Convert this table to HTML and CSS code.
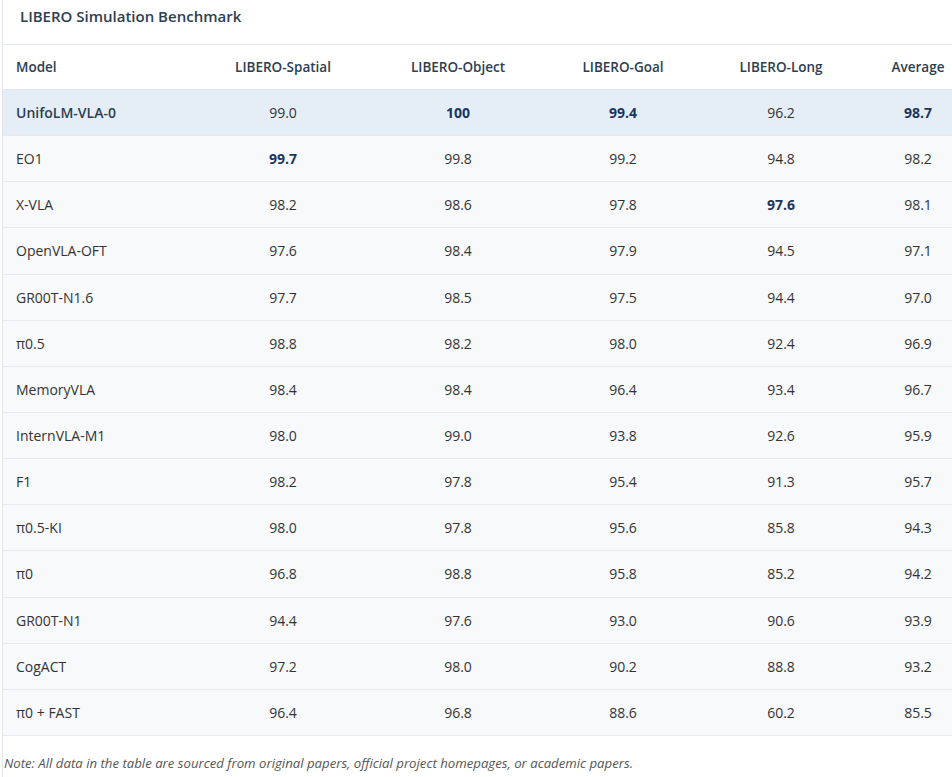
FILE: index.html
```html
<!DOCTYPE html>
<html>
<head>
<meta charset="utf-8">
<link rel="stylesheet" href="styles.css">
</head>
<body>
<div class="wrap">
  <div class="title">LIBERO Simulation Benchmark</div>
  <table class="bench">
    <colgroup>
      <col class="c-model"><col class="c-sp"><col class="c-ob"><col class="c-go"><col class="c-lo"><col class="c-av">
    </colgroup>
    <thead>
      <tr><th class="left">Model</th><th>LIBERO-Spatial</th><th>LIBERO-Object</th><th>LIBERO-Goal</th><th>LIBERO-Long</th><th>Average</th></tr>
    </thead>
    <tbody>
      <tr class="hl"><td class="left name">UnifoLM-VLA-0</td><td>99.0</td><td class="best">100</td><td class="best">99.4</td><td>96.2</td><td class="best">98.7</td></tr>
      <tr><td class="left">EO1</td><td class="best">99.7</td><td>99.8</td><td>99.2</td><td>94.8</td><td>98.2</td></tr>
      <tr><td class="left">X-VLA</td><td>98.2</td><td>98.6</td><td>97.8</td><td class="best">97.6</td><td>98.1</td></tr>
      <tr><td class="left">OpenVLA-OFT</td><td>97.6</td><td>98.4</td><td>97.9</td><td>94.5</td><td>97.1</td></tr>
      <tr><td class="left">GR00T-N1.6</td><td>97.7</td><td>98.5</td><td>97.5</td><td>94.4</td><td>97.0</td></tr>
      <tr><td class="left">π0.5</td><td>98.8</td><td>98.2</td><td>98.0</td><td>92.4</td><td>96.9</td></tr>
      <tr><td class="left">MemoryVLA</td><td>98.4</td><td>98.4</td><td>96.4</td><td>93.4</td><td>96.7</td></tr>
      <tr><td class="left">InternVLA-M1</td><td>98.0</td><td>99.0</td><td>93.8</td><td>92.6</td><td>95.9</td></tr>
      <tr><td class="left">F1</td><td>98.2</td><td>97.8</td><td>95.4</td><td>91.3</td><td>95.7</td></tr>
      <tr><td class="left">π0.5-KI</td><td>98.0</td><td>97.8</td><td>95.6</td><td>85.8</td><td>94.3</td></tr>
      <tr><td class="left">π0</td><td>96.8</td><td>98.8</td><td>95.8</td><td>85.2</td><td>94.2</td></tr>
      <tr><td class="left">GR00T-N1</td><td>94.4</td><td>97.6</td><td>93.0</td><td>90.6</td><td>93.9</td></tr>
      <tr><td class="left">CogACT</td><td>97.2</td><td>98.0</td><td>90.2</td><td>88.8</td><td>93.2</td></tr>
      <tr><td class="left">π0 + FAST</td><td>96.4</td><td>96.8</td><td>88.6</td><td>60.2</td><td>85.5</td></tr>
    </tbody>
  </table>
  <p class="note">Note: All data in the table are sourced from original papers, official project homepages, or academic papers.</p>
</div>
</body>
</html>
```
FILE: styles.css
```css
html, body {
  margin: 0;
  padding: 0;
  background: #ffffff;
  overflow: hidden;
}
body {
  font-family: "Open Sans", "Noto Sans", sans-serif;
  color: #333333;
}
.wrap {
  margin-left: 2px;
  border-left: 1px solid #e3e6ea;
  min-height: 777px;
  overflow: hidden;
}
.title {
  height: 45px;
  box-sizing: border-box;
  padding: 5px 0 0 17px;
  font-size: 15px;
  font-weight: 600;
  color: #2c3e50;
  line-height: 22px;
  border-bottom: 1px solid #e3e6ea;
  width: 980px;
}
.bench {
  border-collapse: collapse;
  table-layout: fixed;
  width: 972px;
  font-size: 14px;
}
.c-model { width: 192px; }
.c-sp { width: 176px; }
.c-ob { width: 174px; }
.c-go { width: 156px; }
.c-lo { width: 160px; }
.c-av { width: 114px; }
.bench th, .bench td {
  text-align: center;
  padding: 0;
  white-space: nowrap;
}
.bench th {
  height: 44px;
  font-size: 13.5px;
  font-weight: 600;
  color: #2c3e50;
  background: #ffffff;
  border-bottom: 1px solid #e3e6ea;
}
.bench td {
  height: 45.15px;
  background: #f8f9fb;
  border-bottom: 1px solid #e6e9ed;
  color: #333333;
}
.bench .left {
  text-align: left;
  padding-left: 13px;
}
.bench tr.hl td {
  background: #e5eef7;
}
.bench td.name {
  font-weight: 600;
  color: #2c3e50;
}
.bench td.best {
  font-weight: 700;
  color: #1b365d;
}
.note {
  margin: 0;
  padding: 18px 0 0 1px;
  font-size: 13.2px;
  font-style: italic;
  color: #555555;
}
```
